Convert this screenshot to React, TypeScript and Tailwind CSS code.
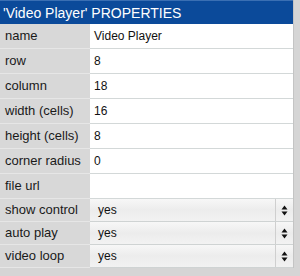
import React from "react";

const textRows: [string, string][] = [
  ["name", "Video Player"],
  ["row", "8"],
  ["column", "18"],
  ["width (cells)", "16"],
  ["height (cells)", "8"],
  ["corner radius", "0"],
  ["file url", ""],
];

const selectRows: [string, string][] = [
  ["show control", "yes"],
  ["auto play", "yes"],
  ["video loop", "yes"],
];

function Arrows() {
  return (
    <svg width="7" height="11" viewBox="0 0 7 11">
      <path d="M3.5 0.5 L6.5 4.5 L0.5 4.5 Z" fill="#111" />
      <path d="M3.5 10.5 L6.5 6.5 L0.5 6.5 Z" fill="#111" />
    </svg>
  );
}

export default function App() {
  return (
    <div
      className="w-[300px] h-[276px] bg-[#d5d5d5] overflow-hidden"
      style={{ fontFamily: '"Liberation Sans", Arial, sans-serif' }}
    >
      <div className="w-[293px] border-r border-[#c4c4c4] box-content">
        <div className="h-[24px] bg-[#0b4a9a] border-t border-[#3a6fb3] flex items-center pl-[3px] text-white text-[14px] leading-none">
          'Video Player' PROPERTIES
        </div>
        {textRows.map(([label, value]) => (
          <div key={label} className="flex h-[25px]">
            <div className="w-[90px] bg-[#d8d8d8] border-b border-[#e6e6e6] flex items-center pl-[5px] text-[13px] text-[#1a1a1a]">
              {label}
            </div>
            <div className="flex-1 bg-white border-b border-[#d3d8d8] flex items-center pl-[4px] text-[12px] text-[#111]">
              {value}
            </div>
          </div>
        ))}
        {selectRows.map(([label, value]) => (
          <div key={label} className="flex h-[23px]">
            <div className="w-[90px] bg-[#d8d8d8] border-b border-[#e6e6e6] flex items-center pl-[5px] text-[13px] text-[#1a1a1a]">
              {label}
            </div>
            <div className="flex-1 border-b border-[#cfd3d3] flex bg-gradient-to-b from-[#f7f7f7] via-[#ececec] to-[#f2f2f2]">
              <div className="flex-1 flex items-center pl-[8px] text-[12px] text-[#111]">
                {value}
              </div>
              <div className="w-[18px] border-l border-[#cfcfcf] flex items-center justify-center">
                <Arrows />
              </div>
            </div>
          </div>
        ))}
      </div>
    </div>
  );
}
